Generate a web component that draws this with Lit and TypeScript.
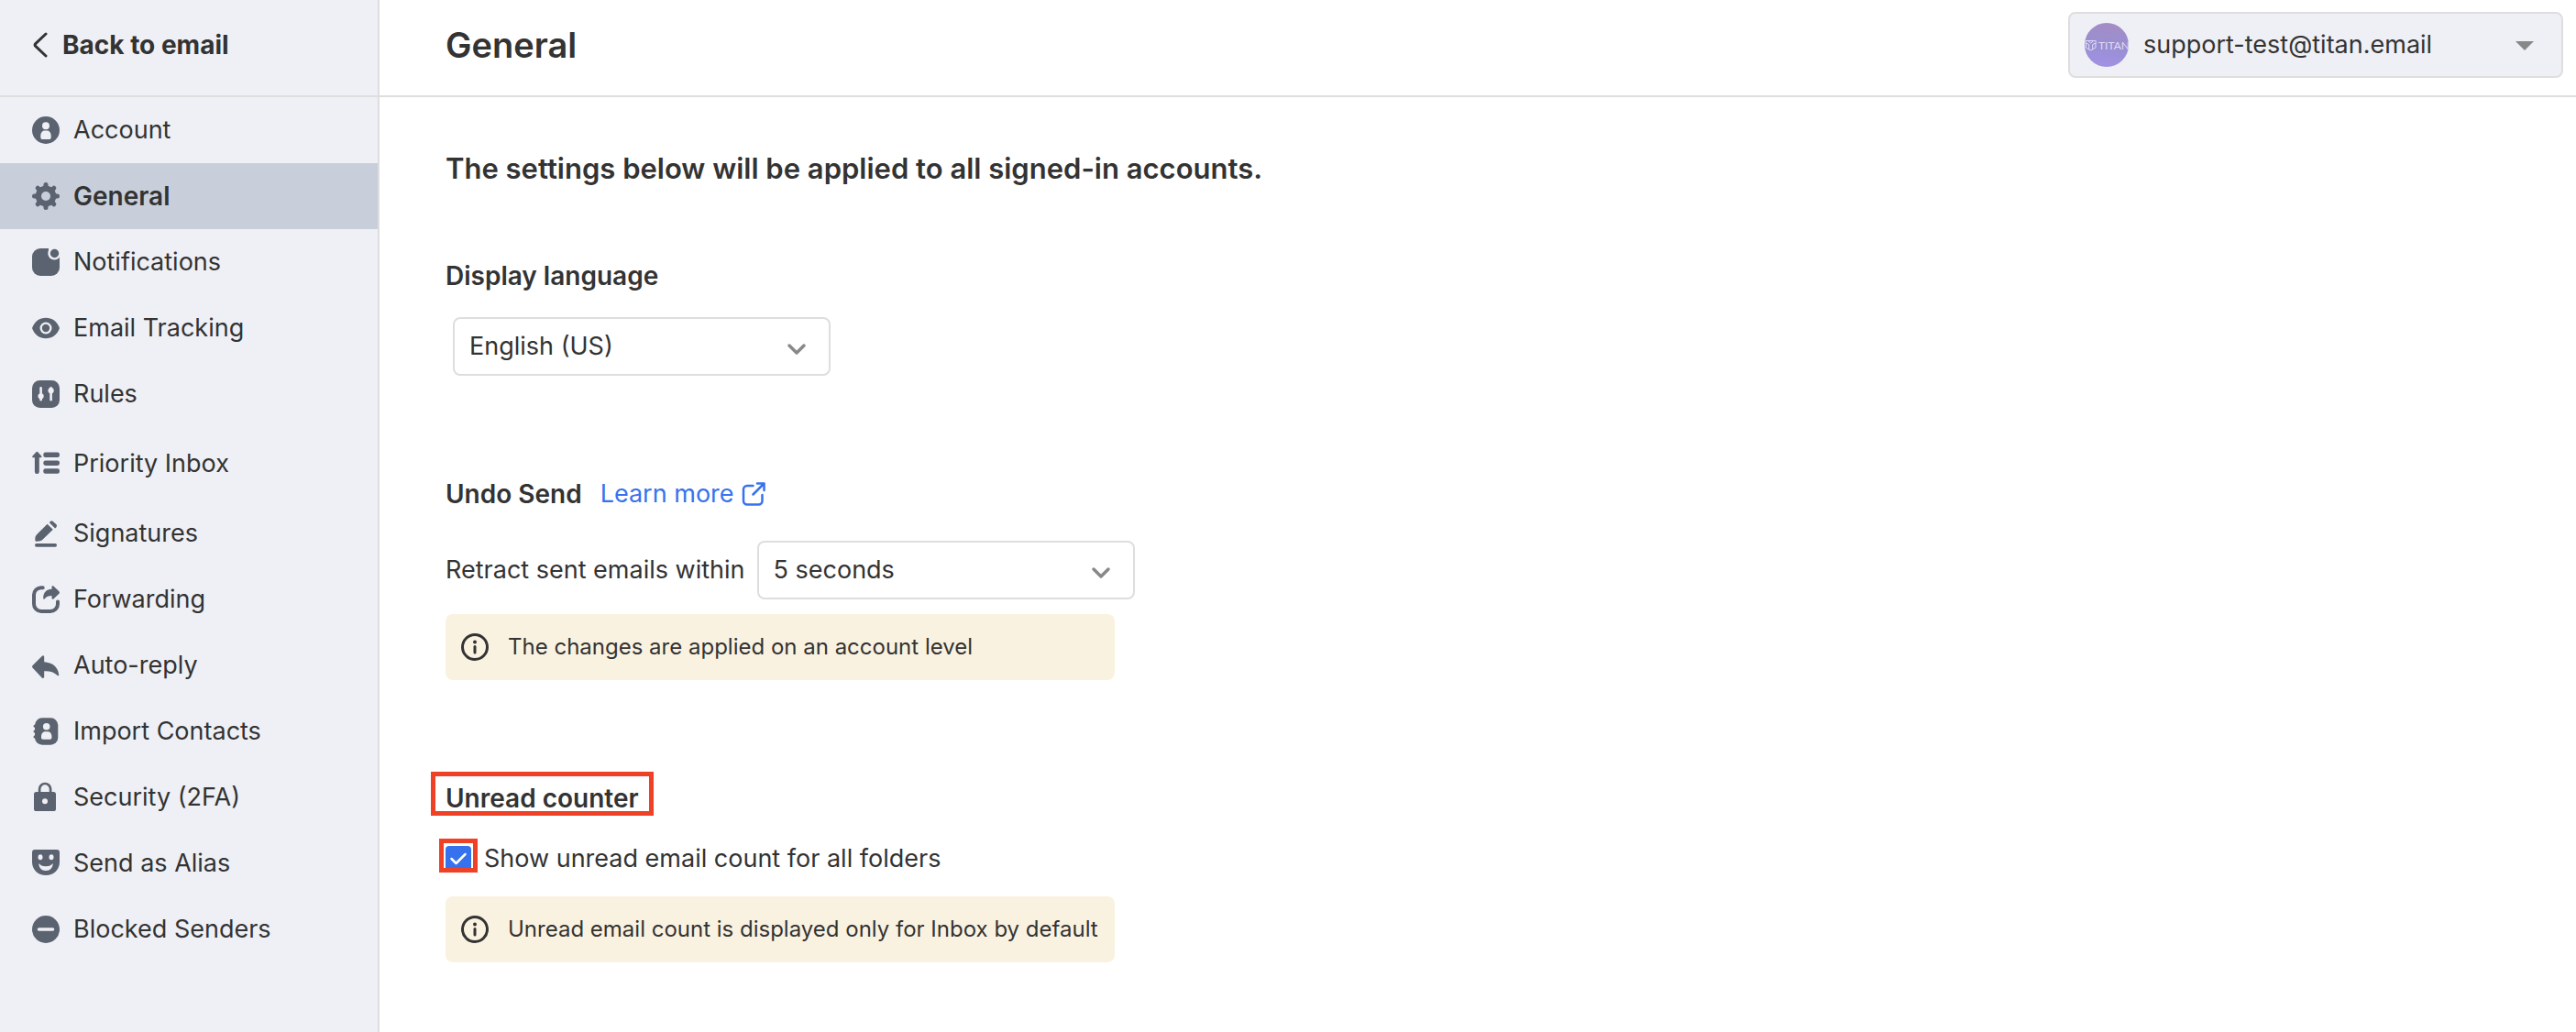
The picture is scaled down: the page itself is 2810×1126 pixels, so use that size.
import { LitElement, html, svg, css, type SVGTemplateResult } from "lit";
import { customElement, property, state } from "lit/decorators.js";
import { classMap } from "lit/directives/class-map.js";

/* Glyphs on a 30 x 30 grid; "cut" shapes take the colour of the row behind them. */
const ICONS: Record<string, SVGTemplateResult> = {
  account: svg`
    <circle cx="15" cy="15" r="15"/>
    <g class="cut">
      <circle cx="15" cy="10.3" r="4"/>
      <path d="M9.3 21.5c0-3.600 1.800-6 4.200-6h3c2.400 0 4.200 2.400 4.200 6v1.200c0 1.600-.8 2.300-2.300 2.300h-6.800c-1.500 0-2.300-.7-2.300-2.300z"/>
    </g>`,
  general: svg`
    <circle cx="15" cy="15" r="11.200"/>
    <g>
      ${[0, 45, 90, 135, 180, 225, 270, 315].map(
        (a) => svg`<path transform="rotate(${a} 15 15)" d="M10.800 5.500C12.400 4.500 12.500 3.500 12.500 2.500a2.500 2.500 0 0 1 5 0c0 1 .1 2 1.700 3z"/>`,
      )}
    </g>
    <circle class="cut" cx="15" cy="15" r="5"/>`,
  notifications: svg`
    <rect width="30" height="30" rx="9"/>
    <circle class="cut" cx="24.300" cy="5.500" r="7"/>
    <path class="cut" d="M18 0h12v5H18z"/>
    <circle cx="24.500" cy="5.500" r="4.700"/>`,
  tracking: svg`
    <path d="M0 15C2.500 7.600 8.500 3.700 15 3.700S27.500 7.600 30 15C27.500 22.400 21.500 26.300 15 26.300S2.500 22.400 0 15z"/>
    <circle class="cut" cx="15" cy="15" r="6.500"/>
    <circle cx="15" cy="15" r="4.200"/>`,
  rules: svg`
    <rect width="30" height="30" rx="8.500"/>
    <g class="cut">
      <rect x="8.300" y="7" width="2.600" height="15.500" rx="1.300"/>
      <circle cx="9.600" cy="17.300" r="3.100"/>
      <rect x="19.300" y="7" width="2.600" height="15.500" rx="1.300"/>
      <circle cx="20.600" cy="11.200" r="3.100"/>
    </g>`,
  priority: svg`
    <rect x="2.900" y="4" width="4.900" height="22" rx="2.200"/>
    <path d="M4.200 2.400a1.600 1.600 0 0 1 2.300 0l3.700 4c.7.900.2 1.900-.9 1.900H1.400C.3 8.300-.2 7.300.5 6.400z"/>
    <rect x="12.300" y="2.500" width="17.700" height="5.500" rx="2.300"/>
    <rect x="12.300" y="11.400" width="17.700" height="5.500" rx="2.300"/>
    <rect x="12.300" y="20.300" width="17.700" height="5.500" rx="2.300"/>`,
  signatures: svg`
    <path d="M3.300 21.800c0-2.800.5-4.200 2-5.700L16.600 4.800l6.200 6-11.600 11.300c-1.300 1.300-2.900 1.700-6.200 1.700-1.200 0-1.700-.6-1.700-2z"/>
    <path d="M18.800 3.200l1-1.200c1-1.200 2-1.100 3.100-.1l3.300 3.200c1.100 1.100 1.100 2.200 0 3.400l-1 1.100z"/>
    <rect x="3" y="26" width="24" height="3.700" rx="1.800"/>`,
  forwarding: svg`
    <path class="line" d="M11.700 2.200H10A7.900 7.900 0 0 0 2 10v10a7.900 7.900 0 0 0 8 8h10a7.900 7.900 0 0 0 8-8v-2.500"/>
    <path d="M12.200 13.500C12.200 7.300 15.600 4 21.500 3.700V1.400c0-1.100 1-1.600 1.900-.9l6 5.700c.8.800.8 1.800 0 2.600l-6 5.600c-.9.800-1.900.3-1.900-.8v-2.500c-3.500 0-5.600.7-7.400 2.900-1 1.200-1.900.8-1.900-.5z"/>`,
  reply: svg`
    <path d="M13.200 6v5.200C22 11.800 28 16.200 29.200 24.800c.2 1.600-.8 1.900-1.800 1-3.800-3.500-8.200-4.800-14.200-4.500v6c0 1.700-1.300 2.200-2.500 1.100L.9 18c-1.100-1.100-1.100-2.200 0-3.300L10.700 4.900c1.200-1.100 2.500-.6 2.500 1.100z"/>`,
  contacts: svg`
    <rect x="3" y="0.300" width="25.300" height="29.400" rx="8"/>
    <g>
      <rect x="1.600" y="7.700" width="5" height="3" rx="1.300"/>
      <rect x="1.600" y="13.600" width="5" height="3" rx="1.300"/>
      <rect x="1.600" y="19.500" width="5" height="3" rx="1.300"/>
    </g>
    <g class="cut">
      <circle cx="15.700" cy="9.800" r="3.800"/>
      <path d="M10 20.800c0-3.200 1.800-5.500 4-5.500h3.400c2.200 0 4 2.300 4 5.500v.9c0 1.300-.7 2-2 2H12c-1.300 0-2-.7-2-2z"/>
    </g>`,
  security: svg`
    <rect x="2" y="9" width="24" height="21" rx="2.600"/>
    <path class="line thin" d="M8.100 10V6a6 6 0 0 1 12 0v4"/>
    <circle class="cut" cx="14" cy="19.200" r="3"/>`,
  alias: svg`
    <path d="M3 0h24a3 3 0 0 1 3 3v10.500C30 22 23.500 28 15 28S0 22 0 13.500V3a3 3 0 0 1 3-3z"/>
    <g class="cut">
      <ellipse cx="9" cy="8.200" rx="2.500" ry="3"/>
      <ellipse cx="21" cy="8.200" rx="2.500" ry="3"/>
      <path d="M7.400 15c1.400 2 4 3.300 7.600 3.300s6.200-1.300 7.600-3.300c.3 4.700-3 8-7.600 8s-7.900-3.300-7.600-8z"/>
    </g>`,
  blocked: svg`
    <circle cx="15" cy="15" r="15"/>
    <rect class="cut" x="5.700" y="13.200" width="18.600" height="3.600" rx="1.800"/>`,
};

interface NavItem {
  icon: string;
  label: string;
  tall?: boolean;
}

const NAV: NavItem[] = [
  { icon: "account", label: "Account" },
  { icon: "general", label: "General" },
  { icon: "notifications", label: "Notifications" },
  { icon: "tracking", label: "Email Tracking" },
  { icon: "rules", label: "Rules" },
  { icon: "priority", label: "Priority Inbox", tall: true },
  { icon: "signatures", label: "Signatures" },
  { icon: "forwarding", label: "Forwarding" },
  { icon: "reply", label: "Auto-reply" },
  { icon: "contacts", label: "Import Contacts" },
  { icon: "security", label: "Security (2FA)" },
  { icon: "alias", label: "Send as Alias" },
  { icon: "blocked", label: "Blocked Senders" },
];

/* Side navigation with the link back to the mailbox. */
@customElement("settings-nav")
export class SettingsNav extends LitElement {
  @state() private current = "General";

  static styles = css`
    :host {
      display: flex;
      flex-direction: column;
      background: #eff0f5;
      border-right: 2px solid #dedede;
      color: #333;
    }
    .back {
      display: flex;
      align-items: center;
      gap: 16px;
      box-sizing: border-box;
      height: 106px;
      padding: 0 36px 6px;
      border-bottom: 2px solid #dedede;
      color: inherit;
      font-size: 28px;
      font-weight: 700;
      text-decoration: none;
    }
    .back svg {
      fill: none;
      stroke: currentColor;
      stroke-width: 3;
      stroke-linecap: round;
      stroke-linejoin: round;
    }
    .list {
      margin: 0;
      padding: 0;
      list-style: none;
    }
    .item {
      display: flex;
      align-items: center;
      gap: 15px;
      height: 72px;
      padding: 0 35px;
      color: inherit;
      line-height: 38px;
      text-decoration: none;
      white-space: nowrap;
      --row: #eff0f5;
    }
    .tall {
      height: 80px;
    }
    .active {
      --row: #c8cfda;
      background: var(--row);
      font-size: 28px;
      font-weight: 600;
    }
    .icon {
      flex: none;
      overflow: visible;
      fill: #5c6370;
    }
    .cut {
      fill: var(--row);
    }
    .line {
      fill: none;
      stroke: #5c6370;
      stroke-width: 4;
      stroke-linecap: round;
    }
    .thin {
      stroke-width: 2.700;
    }
  `;

  private pick(event: Event, label: string) {
    event.preventDefault();
    this.current = label;
  }

  render() {
    return html`
      <a class="back" href="#mail">
        <svg width="16" height="28" viewBox="0 0 16 28" aria-hidden="true">
          <path d="M14 2 2.800 12.600a2 2 0 0 0 0 2.800L14 26" />
        </svg>
        Back to email
      </a>
      <nav aria-label="Settings">
        <ul class="list">
          ${NAV.map((item) => {
            const active = item.label === this.current;
            return html`<li>
              <a
                class=${classMap({ item: true, tall: !!item.tall, active })}
                href="#settings"
                aria-current=${active ? "page" : "false"}
                @click=${(e: Event) => this.pick(e, item.label)}
              >
                <svg class="icon" width="30" height="30" viewBox="0 0 30 30" aria-hidden="true">${ICONS[item.icon]}</svg>
                ${item.label}
              </a>
            </li>`;
          })}
        </ul>
      </nav>
    `;
  }
}

/* Tinted hint line under a setting. */
@customElement("info-note")
export class InfoNote extends LitElement {
  @property() text = "";

  static styles = css`
    :host {
      display: flex;
      align-items: center;
      gap: 20px;
      box-sizing: border-box;
      width: 730px;
      max-width: 100%;
      min-height: 72px;
      padding: 0 16px;
      border-radius: 8px;
      background: #faf2e0;
      color: #333;
      font-size: 24px;
      line-height: 32px;
    }
    .icon {
      flex: none;
      fill: none;
      stroke: #333;
      stroke-width: 3;
      stroke-linecap: round;
    }
    .dot {
      fill: #333;
      stroke: none;
    }
  `;

  render() {
    return html`
      <svg class="icon" width="32" height="32" viewBox="0 0 32 32" aria-hidden="true">
        <circle cx="16" cy="16" r="13.500" />
        <path d="M16 15.500v6.500" />
        <circle class="dot" cx="16" cy="10.500" r="2" />
      </svg>
      <span>${this.text}</span>
    `;
  }
}

@customElement("app-root")
export class AppRoot extends LitElement {
  @state() private showCounts = true;

  static styles = css`
    :host {
      display: grid;
      grid-template-columns: 414px minmax(0, 1fr);
      min-height: 100vh;
      background: #fff;
      color: #333;
      font-family: Inter, "Liberation Sans", sans-serif;
      font-size: 27px;
      line-height: 36px;
    }
    h1,
    h2,
    h3,
    p {
      margin: 0;
    }
    .top {
      display: flex;
      align-items: center;
      justify-content: space-between;
      box-sizing: border-box;
      height: 106px;
      padding: 0 14px 6px 72px;
      border-bottom: 2px solid #dedede;
    }
    .title {
      font-size: 38px;
      line-height: 48px;
      font-weight: 600;
    }
    .picker {
      display: inline-grid;
      align-items: center;
    }
    .picker > * {
      grid-area: 1 / 1;
    }
    .select {
      appearance: none;
      box-sizing: border-box;
      width: 412px;
      height: 64px;
      margin: 0;
      padding: 0 60px 0 16px;
      border: 2px solid #dedede;
      border-radius: 8px;
      background: #fff;
      color: inherit;
      font: inherit;
    }
    .account {
      width: 540px;
      height: 72px;
      padding-left: 80px;
      background: #eff0f5;
    }
    .avatar {
      margin-left: 18px;
      pointer-events: none;
    }
    .chevron {
      justify-self: end;
      margin: 6px 26px 0 0;
      fill: none;
      stroke: #888;
      stroke-width: 3.500;
      stroke-linecap: round;
      stroke-linejoin: round;
      pointer-events: none;
    }
    .caret {
      justify-self: end;
      margin: 2px 32px 0 0;
      fill: #888;
      pointer-events: none;
    }
    .body {
      padding: 58px 72px 76px;
    }
    .lead {
      font-size: 31px;
      line-height: 40px;
      font-weight: 600;
    }
    .language {
      margin-top: 79px;
    }
    .section {
      margin-top: 111px;
    }
    .heading {
      font-size: 28px;
      line-height: 36px;
      font-weight: 600;
    }
    .language .picker {
      display: grid;
      width: 412px;
      margin: 27px 0 0 8px;
    }
    .row {
      display: flex;
      align-items: center;
    }
    .links {
      gap: 20px;
    }
    .link {
      display: flex;
      align-items: center;
      gap: 8px;
      color: #3772ee;
      text-decoration: none;
    }
    .link svg {
      fill: none;
      stroke: currentColor;
      stroke-width: 2.500;
      stroke-linecap: round;
      stroke-linejoin: round;
    }
    .retract {
      gap: 13px;
      margin: 33px 0 16px;
    }
    .counter {
      margin: 30px 0 23px;
      gap: 14px;
    }
    .marked {
      position: relative;
      display: grid;
      width: fit-content;
    }
    .marked::after {
      content: "";
      position: absolute;
      border: 5px solid #ee4126;
      pointer-events: none;
    }
    .mark-title::after {
      inset: -11px -16px -1px -16px;
    }
    .mark-box::after {
      inset: -8px -7px -1px;
    }
    .check {
      grid-area: 1 / 1;
      appearance: none;
      width: 28px;
      height: 28px;
      margin: 0;
      border: 2px solid #b5b9c2;
      border-radius: 4px;
      background: #fff;
    }
    .check:checked {
      border-color: #3772ee;
      background: #3772ee;
    }
    .tick {
      grid-area: 1 / 1;
      place-self: center;
      fill: none;
      stroke: #fff;
      stroke-width: 2.500;
      stroke-linecap: round;
      stroke-linejoin: round;
      pointer-events: none;
    }
    .brand {
      font: 400 12px Lato, sans-serif;
      fill: #e3daf5;
    }
  `;

  private chevron() {
    return html`<svg class="chevron" width="22" height="14" viewBox="0 0 22 14" aria-hidden="true">
      <path d="M3 3l8 8 8-8" />
    </svg>`;
  }

  render() {
    return html`
      <settings-nav></settings-nav>
      <div>
        <header class="top">
          <h1 class="title">General</h1>
          <div class="picker">
            <select class="select account" aria-label="Account">
              <option>support-test@titan.email</option>
            </select>
            <svg class="avatar" width="48" height="48" viewBox="0 0 48 48" aria-hidden="true">
              <defs>
                <linearGradient id="tint" x1="0.600" y1="0" x2="0.500" y2="1">
                  <stop offset="0" stop-color="#a58cc6" />
                  <stop offset="0.500" stop-color="#988fd2" />
                  <stop offset="1" stop-color="#a291e4" />
                </linearGradient>
                <clipPath id="disc"><circle cx="24" cy="24" r="24" /></clipPath>
              </defs>
              <g clip-path="url(#disc)">
                <rect width="48" height="48" fill="url(#tint)" />
                <path
                  d="M1.200 19.500h11v2.500l-3.500 1.500v5.500l-2 .8-2-.8v-5.500l-3.500-1.500zM1.500 22v5l3.200 2M12 22v5l-3.300 2M4 19.800l2.700 2.200 2.700-2.200"
                  fill="none"
                  stroke="#e3daf5"
                  stroke-width="1"
                />
                <text class="brand" x="15" y="28.500">TITAN</text>
              </g>
            </svg>
            <svg class="caret" width="20" height="10" viewBox="0 0 20 10" aria-hidden="true"><path d="M0 0h20L10 10z" /></svg>
          </div>
        </header>

        <main class="body">
          <h2 class="lead">The settings below will be applied to all signed-in accounts.</h2>

          <section class="language">
            <h3 class="heading" id="language-title">Display language</h3>
            <div class="picker">
              <select class="select" aria-labelledby="language-title">
                <option>English (US)</option>
              </select>
              ${this.chevron()}
            </div>
          </section>

          <section class="section">
            <div class="row links">
              <h3 class="heading">Undo Send</h3>
              <a class="link" href="#undo-send">
                Learn more
                <svg width="26" height="26" viewBox="0 0 26 26" aria-hidden="true">
                  <path d="M12.500 4H6a4 4 0 0 0-4 4v12.500a4 4 0 0 0 4 4h12.500a4 4 0 0 0 4-4V14M17 1.500h7.500V9M24.500 1.500 12.500 13.500" />
                </svg>
              </a>
            </div>
            <div class="row retract">
              <label for="undo-window">Retract sent emails within</label>
              <div class="picker">
                <select class="select" id="undo-window">
                  <option>5 seconds</option>
                </select>
                ${this.chevron()}
              </div>
            </div>
            <info-note text="The changes are applied on an account level"></info-note>
          </section>

          <section class="section">
            <h3 class="heading marked mark-title">Unread counter</h3>
            <div class="row counter">
              <span class="marked mark-box">
                <input
                  class="check"
                  type="checkbox"
                  id="show-counts"
                  .checked=${this.showCounts}
                  @change=${(e: Event) => (this.showCounts = (e.target as HTMLInputElement).checked)}
                />
                <svg class="tick" width="20" height="16" viewBox="0 0 20 16" aria-hidden="true"><path d="M2.500 8l5 5L17.500 3" /></svg>
              </span>
              <label for="show-counts">Show unread email count for all folders</label>
            </div>
            <info-note text="Unread email count is displayed only for Inbox by default"></info-note>
          </section>
        </main>
      </div>
    `;
  }
}
